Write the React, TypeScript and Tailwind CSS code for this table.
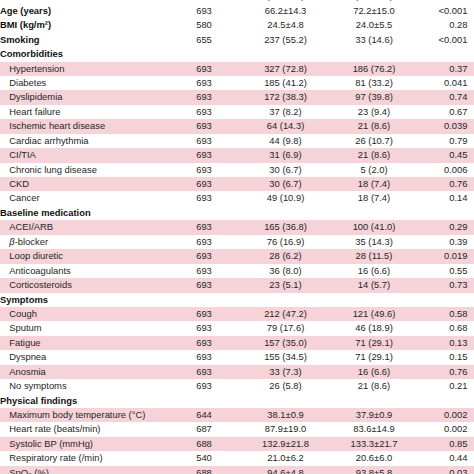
type Row = {
  label: string
  n?: string
  a?: string
  b?: string
  p?: string
  kind: 'head' | 'top' | 'group' | 'item'
  pink?: boolean
}

const rows: Row[] = [
  { label: '', a: '(n = 449)', b: '(n = 244)', kind: 'head' },
  { label: 'Age (years)', n: '693', a: '66.2±14.3', b: '72.2±15.0', p: '<0.001', kind: 'top' },
  { label: 'BMI (kg/m²)', n: '580', a: '24.5±4.8', b: '24.0±5.5', p: '0.28', kind: 'top' },
  { label: 'Smoking', n: '655', a: '237 (55.2)', b: '33 (14.6)', p: '<0.001', kind: 'top' },
  { label: 'Comorbidities', kind: 'group' },
  { label: 'Hypertension', n: '693', a: '327 (72.8)', b: '186 (76.2)', p: '0.37', kind: 'item', pink: true },
  { label: 'Diabetes', n: '693', a: '185 (41.2)', b: '81 (33.2)', p: '0.041', kind: 'item' },
  { label: 'Dyslipidemia', n: '693', a: '172 (38.3)', b: '97 (39.8)', p: '0.74', kind: 'item', pink: true },
  { label: 'Heart failure', n: '693', a: '37 (8.2)', b: '23 (9.4)', p: '0.67', kind: 'item' },
  { label: 'Ischemic heart disease', n: '693', a: '64 (14.3)', b: '21 (8.6)', p: '0.039', kind: 'item', pink: true },
  { label: 'Cardiac arrhythmia', n: '693', a: '44 (9.8)', b: '26 (10.7)', p: '0.79', kind: 'item' },
  { label: 'CI/TIA', n: '693', a: '31 (6.9)', b: '21 (8.6)', p: '0.45', kind: 'item', pink: true },
  { label: 'Chronic lung disease', n: '693', a: '30 (6.7)', b: '5 (2.0)', p: '0.006', kind: 'item' },
  { label: 'CKD', n: '693', a: '30 (6.7)', b: '18 (7.4)', p: '0.76', kind: 'item', pink: true },
  { label: 'Cancer', n: '693', a: '49 (10.9)', b: '18 (7.4)', p: '0.14', kind: 'item' },
  { label: 'Baseline medication', kind: 'group' },
  { label: 'ACEI/ARB', n: '693', a: '165 (36.8)', b: '100 (41.0)', p: '0.29', kind: 'item', pink: true },
  { label: 'β-blocker', n: '693', a: '76 (16.9)', b: '35 (14.3)', p: '0.39', kind: 'item' },
  { label: 'Loop diuretic', n: '693', a: '28 (6.2)', b: '28 (11.5)', p: '0.019', kind: 'item', pink: true },
  { label: 'Anticoagulants', n: '693', a: '36 (8.0)', b: '16 (6.6)', p: '0.55', kind: 'item' },
  { label: 'Corticosteroids', n: '693', a: '23 (5.1)', b: '14 (5.7)', p: '0.73', kind: 'item', pink: true },
  { label: 'Symptoms', kind: 'group' },
  { label: 'Cough', n: '693', a: '212 (47.2)', b: '121 (49.6)', p: '0.58', kind: 'item', pink: true },
  { label: 'Sputum', n: '693', a: '79 (17.6)', b: '46 (18.9)', p: '0.68', kind: 'item' },
  { label: 'Fatigue', n: '693', a: '157 (35.0)', b: '71 (29.1)', p: '0.13', kind: 'item', pink: true },
  { label: 'Dyspnea', n: '693', a: '155 (34.5)', b: '71 (29.1)', p: '0.15', kind: 'item' },
  { label: 'Anosmia', n: '693', a: '33 (7.3)', b: '16 (6.6)', p: '0.76', kind: 'item', pink: true },
  { label: 'No symptoms', n: '693', a: '26 (5.8)', b: '21 (8.6)', p: '0.21', kind: 'item' },
  { label: 'Physical findings', kind: 'group' },
  { label: 'Maximum body temperature (°C)', n: '644', a: '38.1±0.9', b: '37.9±0.9', p: '0.002', kind: 'item', pink: true },
  { label: 'Heart rate (beats/min)', n: '687', a: '87.9±19.0', b: '83.6±14.9', p: '0.002', kind: 'item' },
  { label: 'Systolic BP (mmHg)', n: '688', a: '132.9±21.8', b: '133.3±21.7', p: '0.85', kind: 'item', pink: true },
  { label: 'Respiratory rate (/min)', n: '540', a: '21.0±6.2', b: '20.6±6.0', p: '0.44', kind: 'item' },
  { label: 'SpO₂ (%)', n: '688', a: '94.6±4.8', b: '93.8±5.8', p: '0.03', kind: 'item', pink: true },
]

function Label({ row }: { row: Row }) {
  if (row.kind === 'item') {
    if (row.label.startsWith('β')) {
      return (
        <span className="pl-[9.3px] text-[#262626]">
          <span className="italic">β</span>
          {row.label.slice(1)}
        </span>
      )
    }
    return <span className="pl-[9.3px] text-[#262626]">{row.label}</span>
  }
  return <span className="font-bold text-[#111]">{row.label}</span>
}

export default function App() {
  return (
    <div className="w-[474px] h-[474px] overflow-hidden bg-white">
      <div className="mt-[-10.65px] font-['Liberation_Sans',Arial,sans-serif] text-[9.4px] leading-[14.45px] text-[#262626]">
        {rows.map((row, i) => (
          <div
            key={i}
            className={`grid grid-cols-[184px_40px_123px_54px_1fr] h-[14.45px] items-center whitespace-nowrap ${
              row.pink ? 'bg-[#f5d3d9]' : 'bg-white'
            }`}
          >
            <div>
              <Label row={row} />
            </div>
            <div className="text-center">{row.n}</div>
            <div className="text-center">{row.a}</div>
            <div className="flex justify-center">
              <span>{row.b}</span>
            </div>
            <div className="text-right pr-[6.5px]">{row.p}</div>
          </div>
        ))}
      </div>
    </div>
  )
}
